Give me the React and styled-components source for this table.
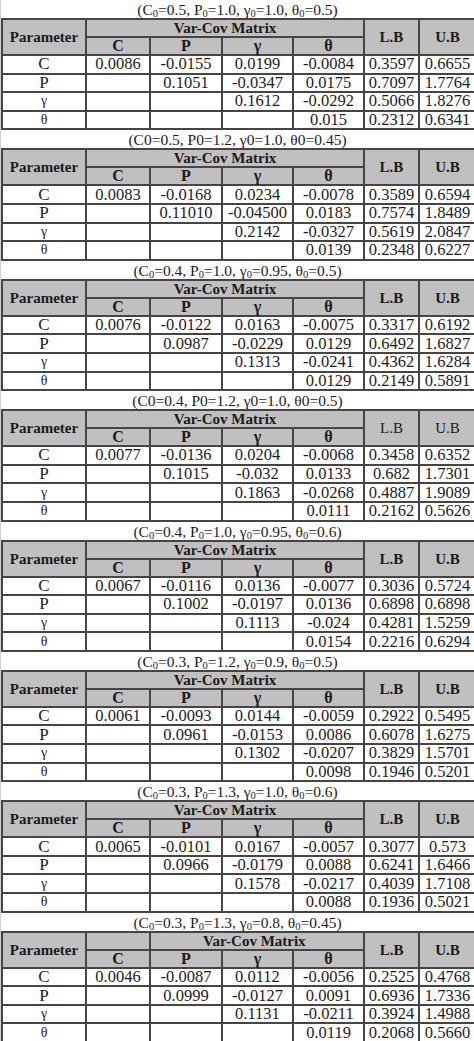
import React from 'react';
import styled, {createGlobalStyle} from "styled-components";

const GlobalStyle = createGlobalStyle`
    html, body {
        margin: 0;
        padding: 0;
        background: #ffffff;
    }
    body {
        font-family: "Liberation Serif", "Times New Roman", serif;
        color: #1a1a1a;
    }
`;

const WIDTHS = [84, 64, 72, 71, 71, 55, 57];
const LABELS = ["C", "P", "γ", "θ"];

const BLOCKS = [
    {
        caption: {sub: true, c: "0.5", p: "1.0", g: "1.0", t: "0.5"},
        rows: [
            ["0.0086", "-0.0155", "0.0199", "-0.0084", "0.3597", "0.6655"],
            ["", "0.1051", "-0.0347", "0.0175", "0.7097", "1.7764"],
            ["", "", "0.1612", "-0.0292", "0.5066", "1.8276"],
            ["", "", "", "0.015", "0.2312", "0.6341"],
        ],
    },
    {
        caption: {sub: false, c: "0.5", p: "1.2", g: "1.0", t: "0.45"},
        rows: [
            ["0.0083", "-0.0168", "0.0234", "-0.0078", "0.3589", "0.6594"],
            ["", "0.11010", "-0.04500", "0.0183", "0.7574", "1.8489"],
            ["", "", "0.2142", "-0.0327", "0.5619", "2.0847"],
            ["", "", "", "0.0139", "0.2348", "0.6227"],
        ],
    },
    {
        caption: {sub: true, c: "0.4", p: "1.0", g: "0.95", t: "0.5"},
        rows: [
            ["0.0076", "-0.0122", "0.0163", "-0.0075", "0.3317", "0.6192"],
            ["", "0.0987", "-0.0229", "0.0129", "0.6492", "1.6827"],
            ["", "", "0.1313", "-0.0241", "0.4362", "1.6284"],
            ["", "", "", "0.0129", "0.2149", "0.5891"],
        ],
    },
    {
        caption: {sub: false, c: "0.4", p: "1.2", g: "1.0", t: "0.5"},
        plainBounds: true,
        rows: [
            ["0.0077", "-0.0136", "0.0204", "-0.0068", "0.3458", "0.6352"],
            ["", "0.1015", "-0.032", "0.0133", "0.682", "1.7301"],
            ["", "", "0.1863", "-0.0268", "0.4887", "1.9089"],
            ["", "", "", "0.0111", "0.2162", "0.5626"],
        ],
    },
    {
        caption: {sub: true, c: "0.4", p: "1.0", g: "0.95", t: "0.6"},
        rows: [
            ["0.0067", "-0.0116", "0.0136", "-0.0077", "0.3036", "0.5724"],
            ["", "0.1002", "-0.0197", "0.0136", "0.6898", "0.6898"],
            ["", "", "0.1113", "-0.024", "0.4281", "1.5259"],
            ["", "", "", "0.0154", "0.2216", "0.6294"],
        ],
    },
    {
        caption: {sub: true, c: "0.3", p: "1.2", g: "0.9", t: "0.5"},
        rows: [
            ["0.0061", "-0.0093", "0.0144", "-0.0059", "0.2922", "0.5495"],
            ["", "0.0961", "-0.0153", "0.0086", "0.6078", "1.6275"],
            ["", "", "0.1302", "-0.0207", "0.3829", "1.5701"],
            ["", "", "", "0.0098", "0.1946", "0.5201"],
        ],
    },
    {
        caption: {sub: true, c: "0.3", p: "1.3", g: "1.0", t: "0.6"},
        rows: [
            ["0.0065", "-0.0101", "0.0167", "-0.0057", "0.3077", "0.573"],
            ["", "0.0966", "-0.0179", "0.0088", "0.6241", "1.6466"],
            ["", "", "0.1578", "-0.0217", "0.4039", "1.7108"],
            ["", "", "", "0.0088", "0.1936", "0.5021"],
        ],
    },
    {
        caption: {sub: true, c: "0.3", p: "1.3", g: "0.8", t: "0.45"},
        splitHeader: true,
        rows: [
            ["0.0046", "-0.0087", "0.0112", "-0.0056", "0.2525", "0.4768"],
            ["", "0.0999", "-0.0127", "0.0091", "0.6936", "1.7336"],
            ["", "", "0.1131", "-0.0211", "0.3924", "1.4988"],
            ["", "", "", "0.0119", "0.2068", "0.5660"],
        ],
    },
];

// some captions in the source were typed with real subscripts, some without
const Caption = ({sub, c, p, g, t}) => {
    const S = sub ? Sub : React.Fragment;
    return (
        <CaptionRow>
            (C<S>0</S>={c}, P<S>0</S>={p}, γ<S>0</S>={g}, θ<S>0</S>={t})
        </CaptionRow>
    );
};

const Block = ({block}) => (
    <section>
        <Caption {...block.caption}/>
        <Table>
            <colgroup>
                {WIDTHS.map((w, i) => <col key={i} style={{width: w}}/>)}
            </colgroup>
            <thead>
                <HeadRow>
                    <HeadCell rowSpan={2}>Parameter</HeadCell>
                    {block.splitHeader ? (
                        <>
                            <HeadCell/>
                            <HeadCell colSpan={3} $shift>Var-Cov Matrix</HeadCell>
                        </>
                    ) : (
                        <HeadCell colSpan={4}>Var-Cov Matrix</HeadCell>
                    )}
                    <HeadCell rowSpan={2} $plain={block.plainBounds}>L.B</HeadCell>
                    <HeadCell rowSpan={2} $plain={block.plainBounds}>U.B</HeadCell>
                </HeadRow>
                <HeadRow>
                    <SubHeadCell>C</SubHeadCell>
                    <SubHeadCell>P</SubHeadCell>
                    <SubHeadCell>γ</SubHeadCell>
                    <SubHeadCell>θ</SubHeadCell>
                </HeadRow>
            </thead>
            <tbody>
                {block.rows.map((row, r) => (
                    <DataRow key={r}>
                        <LabelCell $greek={r > 1}>{LABELS[r]}</LabelCell>
                        {row.map((v, i) => <Cell key={i}>{v}</Cell>)}
                    </DataRow>
                ))}
            </tbody>
        </Table>
    </section>
);

const App = () => (
    <>
        <GlobalStyle/>
        <Page>
            {BLOCKS.map((b, i) => <Block key={i} block={b}/>)}
        </Page>
    </>
);

export default App;

const Page = styled.div`
    width: 474px;
    display: flex;
    flex-direction: column;
    border-left: 1px solid #cfcfcf;
    box-sizing: border-box;
`;

const CaptionRow = styled.div`
    height: 18px;
    line-height: 19px;
    text-align: center;
    font-size: 15.5px;
    color: #1c1c1c;
    white-space: nowrap;
`;

const Sub = styled.sub`
    font-size: 0.68em;
    vertical-align: -0.2em;
    line-height: 0;
`;

const Table = styled.table`
    width: 473px;
    table-layout: fixed;
    border-collapse: collapse;
    border: 2px solid #3a3a3a;
`;

const HeadRow = styled.tr`
    height: 18px;
`;

const HeadCell = styled.th`
    background: #c0c0c0;
    border: 2px solid #454545;
    padding: 0;
    font-size: 15px;
    line-height: 16px;
    font-weight: ${({$plain}) => $plain ? "normal" : "bold"};
    text-align: ${({$shift}) => $shift ? "left" : "center"};
    padding-left: ${({$shift}) => $shift ? "52px" : "0"};
    color: #1a1a1a;
    white-space: nowrap;
`;

const SubHeadCell = styled(HeadCell)`
    font-size: 16px;
`;

const DataRow = styled.tr`
    height: 18.6px;
`;

const Cell = styled.td`
    border: 2px solid #454545;
    padding: 0;
    text-align: center;
    font-size: 16.5px;
    line-height: 16px;
    color: #1c1c1c;
    white-space: nowrap;
`;

const LabelCell = styled(Cell)`
    font-size: ${({$greek}) => $greek ? "14px" : "17px"};
`;
